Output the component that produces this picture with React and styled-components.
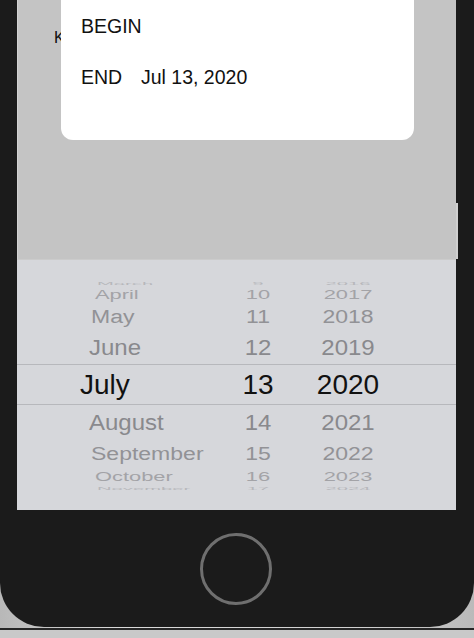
import React from "react";
import styled, { createGlobalStyle } from "styled-components";

const GlobalStyle = createGlobalStyle`
  html, body {
    margin: 0;
    padding: 0;
  }
  body {
    width: 474px;
    height: 638px;
    overflow: hidden;
    font-family: "Liberation Sans", Arial, sans-serif;
  }
`;

// dy nudges the far rows so the wheel curve reads right
const MONTHS = [
  { m: "March", d: "9", y: "2016", depth: 4, dy: 2 },
  { m: "April", d: "10", y: "2017", depth: 3, dy: 1 },
  { m: "May", d: "11", y: "2018", depth: 2, dy: 1 },
  { m: "June", d: "12", y: "2019", depth: 1, dy: 1 },
  { m: "July", d: "13", y: "2020", depth: 0, dy: 0 },
  { m: "August", d: "14", y: "2021", depth: 1, dy: 1 },
  { m: "September", d: "15", y: "2022", depth: 2, dy: 1 },
  { m: "October", d: "16", y: "2023", depth: 3, dy: 2 },
  { m: "November", d: "17", y: "2024", depth: 4, dy: 4 },
];

// how a wheel row looks as it rolls away from the selection band:
// size is the upright font size, sx/sy the squash of the rolled face
const DEPTH = {
  0: { h: 41, size: 28, sx: 1, sy: 1, color: "#111", dx: 0 },
  1: { h: 34, size: 24, sx: 1, sy: 0.9, color: "#89898d", dx: 9 },
  2: { h: 28, size: 23.5, sx: 0.98, sy: 0.8, color: "#929296", dx: 11 },
  3: { h: 16, size: 23, sx: 0.95, sy: 0.53, color: "#a3a3a7", dx: 15 },
  4: { h: 6, size: 22, sx: 0.92, sy: 0.17, color: "#b7b7bb", dx: 17 },
};

const App = () => {
  return (
    <>
      <GlobalStyle />
      <Stage>
        <Phone>
          <Screen>
            <Backdrop>
              <Behind>K</Behind>
              <Card>
                <Field>
                  <Label>BEGIN</Label>
                </Field>
                <Field $gap>
                  <Label>END</Label>
                  <Value>Jul 13, 2020</Value>
                </Field>
              </Card>
            </Backdrop>
            <Picker>
              {MONTHS.map((r) => {
                const s = DEPTH[r.depth];
                return (
                  <Row key={r.m} $h={s.h} $selected={r.depth === 0}>
                    <Cell $s={s} $dy={r.dy} $align="left">
                      {r.m}
                    </Cell>
                    <Cell $s={s} $dy={r.dy} $align="center">
                      {r.d}
                    </Cell>
                    <Cell $s={s} $dy={r.dy} $align="center">
                      {r.y}
                    </Cell>
                  </Row>
                );
              })}
            </Picker>
          </Screen>
          <Chin>
            <HomeButton />
          </Chin>
        </Phone>
        <Ledge />
      </Stage>
    </>
  );
};

export default App;

const Stage = styled.div`
  width: 474px;
  height: 638px;
  display: flex;
  flex-direction: column;
  background: linear-gradient(90deg, #b8b8b8, #dadada 25%, #d2d2d2 75%, #bababa);
`;

const Phone = styled.div`
  height: 627px;
  flex-shrink: 0;
  box-sizing: border-box;
  background: #1b1b1b;
  border-radius: 0 0 44px 44px;
  padding: 0 18px 0 17px;
  display: flex;
  flex-direction: column;
`;

const Ledge = styled.div`
  flex: 1;
  margin-top: 1px;
  border-top: 2px solid #262626;
  background: #c9c9c9;
`;

const Screen = styled.div`
  width: 439px;
  height: 510px;
  display: flex;
  flex-direction: column;
`;

const Backdrop = styled.div`
  position: relative;
  height: 260px;
  flex-shrink: 0;
  box-sizing: border-box;
  background: #c4c4c4;
  border-left: 1px solid #d2d2d2;
  border-bottom: 1px solid #cbcbcb;

  /* thin light sliver peeking out at the screen's right edge */
  &::after {
    content: "";
    position: absolute;
    right: -2px;
    top: 203px;
    bottom: 0;
    width: 2px;
    background: #cfcfcf;
  }
`;

const Behind = styled.div`
  padding: 30px 0 0 36px;
  font-size: 16px;
  line-height: 16px;
  color: #111;
`;

const Card = styled.div`
  position: absolute;
  left: 43px;
  top: -20px;
  width: 353px;
  height: 160px;
  box-sizing: border-box;
  padding: 34px 20px 0;
  background: #fff;
  border-radius: 12px;
`;

const Field = styled.div`
  display: flex;
  align-items: center;
  height: 24px;
  margin-top: ${(p) => (p.$gap ? "27px" : "0")};
  font-size: 19.5px;
  line-height: 24px;
  color: #111;
`;

const Label = styled.span`
  width: 60px;
`;

const Value = styled.span``;

const Picker = styled.div`
  flex: 1;
  box-sizing: border-box;
  padding-top: 20px;
  background: #d6d7db;
  overflow: hidden;
`;

const Row = styled.div`
  display: grid;
  grid-template-columns: 153px 50px 130px;
  align-items: center;
  box-sizing: border-box;
  height: ${(p) => p.$h}px;
  padding-left: 63px;
  border-top: ${(p) => (p.$selected ? "1px solid #b7b8bc" : "none")};
  border-bottom: ${(p) => (p.$selected ? "1px solid #b7b8bc" : "none")};
`;

/* the squash is baked into the font size, then the text is widened back out */
const Cell = styled.div`
  font-size: ${(p) => p.$s.size * p.$s.sy}px;
  line-height: 1;
  white-space: nowrap;
  color: ${(p) => p.$s.color};
  text-align: ${(p) => p.$align};
  transform-origin: ${(p) => (p.$align === "left" ? "left center" : "center")};
  transform: ${(p) =>
    `translate(${p.$align === "left" ? p.$s.dx : 0}px, ${p.$dy}px) scaleX(${p.$s.sx / p.$s.sy})`};
`;

const Chin = styled.div`
  flex: 1;
  display: flex;
  align-items: center;
  justify-content: center;
  padding-right: 1px;
`;

const HomeButton = styled.div`
  width: 72px;
  height: 72px;
  box-sizing: border-box;
  border-radius: 50%;
  border: 3px solid #6f6f6f;
`;
